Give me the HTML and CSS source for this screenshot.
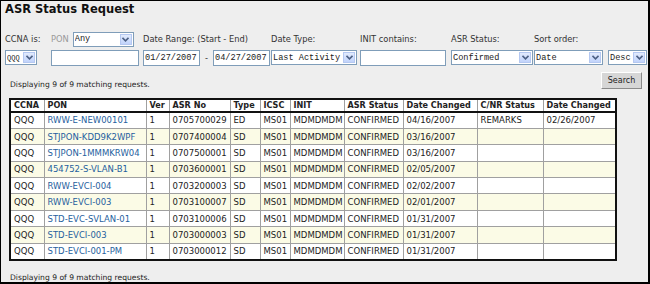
FILE: index.html
```html
<!DOCTYPE html>
<html lang="en">
<head>
    <meta charset="UTF-8">
    <title>ASR Status Request</title>
    <link rel="stylesheet" href="styles.css">
</head>
<body>
<div class="page">
    <h1 class="title">ASR Status Request</h1>

    <form class="filters">
        <label class="lbl">CCNA is:</label>
        <div class="lbl pon">
            <span class="muted">PON</span>
            <span class="sel w-any"><select><option>Any</option></select><span class="arrow"><svg width="7" height="5" viewBox="0 0 7 5"><path d="M0.5 0.8 L3.5 3.8 L6.5 0.8" fill="none" stroke="#4d6185" stroke-width="1.6"/></svg></span></span>
        </div>
        <label class="lbl">Date Range: (Start - End)</label>
        <label class="lbl">Date Type:</label>
        <label class="lbl">INIT contains:</label>
        <label class="lbl">ASR Status:</label>
        <label class="lbl">Sort order:</label>

        <div class="ctl">
            <span class="sel w-qqq"><select><option>QQQ</option></select><span class="arrow"><svg width="7" height="5" viewBox="0 0 7 5"><path d="M0.5 0.8 L3.5 3.8 L6.5 0.8" fill="none" stroke="#4d6185" stroke-width="1.6"/></svg></span></span>
        </div>
        <div class="ctl"><input class="txt w-pon" type="text"></div>
        <div class="ctl">
            <input class="txt w-date" type="text" value="01/27/2007">
            <span class="dash">-</span>
            <input class="txt w-date" type="text" value="04/27/2007">
        </div>
        <div class="ctl">
            <span class="sel w-type"><select><option>Last Activity</option></select><span class="arrow"><svg width="7" height="5" viewBox="0 0 7 5"><path d="M0.5 0.8 L3.5 3.8 L6.5 0.8" fill="none" stroke="#4d6185" stroke-width="1.6"/></svg></span></span>
        </div>
        <div class="ctl"><input class="txt w-init" type="text"></div>
        <div class="ctl">
            <span class="sel w-status"><select><option>Confirmed</option></select><span class="arrow"><svg width="7" height="5" viewBox="0 0 7 5"><path d="M0.5 0.8 L3.5 3.8 L6.5 0.8" fill="none" stroke="#4d6185" stroke-width="1.6"/></svg></span></span>
        </div>
        <div class="ctl sort">
            <span class="sel w-sort"><select><option>Date</option></select><span class="arrow"><svg width="7" height="5" viewBox="0 0 7 5"><path d="M0.5 0.8 L3.5 3.8 L6.5 0.8" fill="none" stroke="#4d6185" stroke-width="1.6"/></svg></span></span>
            <span class="sel w-dir"><select><option>Desc</option></select><span class="arrow"><svg width="7" height="5" viewBox="0 0 7 5"><path d="M0.5 0.8 L3.5 3.8 L6.5 0.8" fill="none" stroke="#4d6185" stroke-width="1.6"/></svg></span></span>
        </div>
    </form>

    <div class="results-bar">
        <div class="count">Displaying 9 of 9 matching requests.</div>
        <button class="btn" type="button">Search</button>
    </div>

    <table class="results">
        <colgroup>
            <col style="width:34px"><col style="width:102px"><col style="width:23px"><col style="width:61px">
            <col style="width:30px"><col style="width:30px"><col style="width:54px"><col style="width:59px">
            <col style="width:74px"><col style="width:66px"><col style="width:73px">
        </colgroup>
        <thead>
            <tr>
                <th>CCNA</th><th>PON</th><th>Ver</th><th>ASR No</th><th>Type</th><th>ICSC</th>
                <th>INIT</th><th>ASR Status</th><th>Date Changed</th><th>C/NR Status</th><th>Date Changed</th>
            </tr>
        </thead>
        <tbody>
            <tr><td>QQQ</td><td><a href="#">RWW-E-NEW00101</a></td><td>1</td><td>0705700029</td><td>ED</td><td>MS01</td><td>MDMDMDM</td><td>CONFIRMED</td><td>04/16/2007</td><td>REMARKS</td><td>02/26/2007</td></tr>
            <tr><td>QQQ</td><td><a href="#">STJPON-KDD9K2WPF</a></td><td>1</td><td>0707400004</td><td>SD</td><td>MS01</td><td>MDMDMDM</td><td>CONFIRMED</td><td>03/16/2007</td><td></td><td></td></tr>
            <tr><td>QQQ</td><td><a href="#">STJPON-1MMMKRW04</a></td><td>1</td><td>0707500001</td><td>SD</td><td>MS01</td><td>MDMDMDM</td><td>CONFIRMED</td><td>03/16/2007</td><td></td><td></td></tr>
            <tr><td>QQQ</td><td><a href="#">454752-S-VLAN-B1</a></td><td>1</td><td>0703600001</td><td>SD</td><td>MS01</td><td>MDMDMDM</td><td>CONFIRMED</td><td>02/05/2007</td><td></td><td></td></tr>
            <tr><td>QQQ</td><td><a href="#">RWW-EVCI-004</a></td><td>1</td><td>0703200003</td><td>SD</td><td>MS01</td><td>MDMDMDM</td><td>CONFIRMED</td><td>02/02/2007</td><td></td><td></td></tr>
            <tr><td>QQQ</td><td><a href="#">RWW-EVCI-003</a></td><td>1</td><td>0703100007</td><td>SD</td><td>MS01</td><td>MDMDMDM</td><td>CONFIRMED</td><td>02/01/2007</td><td></td><td></td></tr>
            <tr><td>QQQ</td><td><a href="#">STD-EVC-SVLAN-01</a></td><td>1</td><td>0703100006</td><td>SD</td><td>MS01</td><td>MDMDMDM</td><td>CONFIRMED</td><td>01/31/2007</td><td></td><td></td></tr>
            <tr><td>QQQ</td><td><a href="#">STD-EVCI-003</a></td><td>1</td><td>0703000003</td><td>SD</td><td>MS01</td><td>MDMDMDM</td><td>CONFIRMED</td><td>01/31/2007</td><td></td><td></td></tr>
            <tr><td>QQQ</td><td><a href="#">STD-EVCI-001-PM</a></td><td>1</td><td>0703000012</td><td>SD</td><td>MS01</td><td>MDMDMDM</td><td>CONFIRMED</td><td>01/31/2007</td><td></td><td></td></tr>
        </tbody>
    </table>

    <div class="count bottom">Displaying 9 of 9 matching requests.</div>
</div>
</body>
</html>
```

FILE: styles.css
```css
html, body {
    margin: 0;
    padding: 0;
}
body {
    font-family: "DejaVu Sans", Verdana, sans-serif;
    font-size: 8.3px;
    color: #222;
    background: #fff;
}
.page {
    box-sizing: border-box;
    width: 650px;
    height: 284px;
    overflow: hidden;
    background: #eeeeee;
    border: 1px solid #000;
    border-right-width: 2px;
    border-bottom-width: 2px;
    padding: 0 0 0 4px;
}
.title {
    margin: 0;
    font-size: 11.5px;
    font-weight: bold;
    line-height: 17px;
    color: #111;
}

/* filter form */
.filters {
    display: grid;
    grid-template-columns: 46px 92px 128px 89px 91px 83px auto;
    grid-template-rows: 20px 17px;
    margin-top: 11px;
    align-items: center;
}
.lbl {
    color: #333;
    white-space: nowrap;
    display: flex;
    align-items: center;
}
.pon {
    gap: 4px;
}
.muted {
    color: #999;
}
.ctl {
    display: flex;
    align-items: center;
    white-space: nowrap;
}
.sort {
    gap: 5px;
}
.txt, .sel select {
    font-family: "Liberation Mono", "Courier New", monospace;
    font-size: 8.6px;
    color: #222;
}
.txt {
    box-sizing: border-box;
    height: 16px;
    border: 1px solid #7f9db9;
    background: #fff;
    padding: 0 1px;
    margin: 0;
    outline: none;
}
.dash {
    margin: 0 5px;
    color: #333;
}
.sel {
    box-sizing: border-box;
    display: inline-flex;
    align-items: stretch;
    height: 15px;
    border: 1px solid #7f9db9;
    background: #fff;
}
.sel select {
    appearance: none;
    -webkit-appearance: none;
    flex: 1;
    min-width: 0;
    border: 0;
    background: transparent;
    padding: 0 1px;
    margin: 0;
    outline: none;
}
.arrow {
    flex: none;
    width: 12px;
    margin: 1px;
    border: 1px solid #b5c8f1;
    background: linear-gradient(#e2ebfd, #c1d3fb);
    display: flex;
    align-items: center;
    justify-content: center;
    box-sizing: border-box;
}
.w-any { width: 61px; }
.w-qqq { width: 32px; }
.w-pon { width: 88px; }
.w-date { width: 57px; }
.w-type { width: 86px; }
.w-init { width: 86px; }
.w-status { width: 82px; }
.w-sort { width: 69px; }
.w-dir { width: 39px; }
.w-qqq select { font-size: 7px; }

/* results */
.results-bar {
    display: flex;
    justify-content: space-between;
    align-items: flex-end;
    margin-top: 6px;
    padding-right: 6px;
}
.count {
    color: #222;
    font-size: 7.6px;
    padding-left: 5px;
}
.btn {
    box-sizing: border-box;
    width: 41px;
    height: 17px;
    font-family: "DejaVu Sans", Verdana, sans-serif;
    font-size: 8px;
    color: #222;
    background: #d6d6d6;
    border: 1px solid;
    border-color: #fff #8a8a8a #8a8a8a #fff;
    padding: 0;
}
.results {
    margin: 9px 0 0 4px;
    width: 607px;
    table-layout: fixed;
    border-collapse: collapse;
    border: 2px solid #111;
    background: #fff;
}
.results th, .results td {
    height: 15.4px;
    padding: 0 3px;
    border: 1px solid #a0a0a0;
    text-align: left;
    white-space: nowrap;
    overflow: hidden;
    font-size: 8.5px;
    line-height: 12px;
}
.results th {
    font-weight: bold;
    font-size: 8.1px;
    height: 10.5px;
    line-height: 10px;
    border-top: 1px solid #111;
    border-bottom: 2px solid #111;
}
.results tbody tr:nth-child(even) td {
    background: #fbfbe6;
}
.results a {
    color: #1f5f9e;
    text-decoration: none;
}
.count.bottom {
    margin-top: 12px;
}
```
